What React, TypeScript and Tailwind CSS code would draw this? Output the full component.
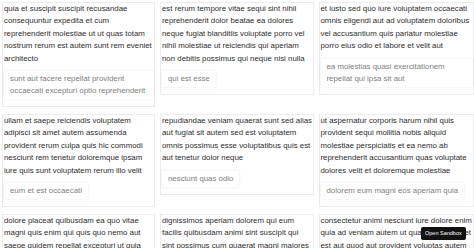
import type { FC } from 'react'

type Post = { id: number; title: string; body: string }

const posts: Post[] = [
  {
    id: 1,
    title: 'sunt aut facere repellat provident occaecati excepturi optio reprehenderit',
    body: 'quia et suscipit suscipit recusandae consequuntur expedita et cum reprehenderit molestiae ut ut quas totam nostrum rerum est autem sunt rem eveniet architecto',
  },
  {
    id: 2,
    title: 'qui est esse',
    body: 'est rerum tempore vitae sequi sint nihil reprehenderit dolor beatae ea dolores neque fugiat blanditiis voluptate porro vel nihil molestiae ut reiciendis qui aperiam non debitis possimus qui neque nisi nulla',
  },
  {
    id: 3,
    title: 'ea molestias quasi exercitationem repellat qui ipsa sit aut',
    body: 'et iusto sed quo iure voluptatem occaecati omnis eligendi aut ad voluptatem doloribus vel accusantium quis pariatur molestiae porro eius odio et labore et velit aut',
  },
  {
    id: 4,
    title: 'eum et est occaecati',
    body: 'ullam et saepe reiciendis voluptatem adipisci sit amet autem assumenda provident rerum culpa quis hic commodi nesciunt rem tenetur doloremque ipsam iure quis sunt voluptatem rerum illo velit',
  },
  {
    id: 5,
    title: 'nesciunt quas odio',
    body: 'repudiandae veniam quaerat sunt sed alias aut fugiat sit autem sed est voluptatem omnis possimus esse voluptatibus quis est aut tenetur dolor neque',
  },
  {
    id: 6,
    title: 'dolorem eum magni eos aperiam quia',
    body: 'ut aspernatur corporis harum nihil quis provident sequi mollitia nobis aliquid molestiae perspiciatis et ea nemo ab reprehenderit accusantium quas voluptate dolores velit et doloremque molestiae',
  },
  {
    id: 7,
    title: 'magnam facilis autem',
    body: 'dolore placeat quibusdam ea quo vitae magni quis enim qui quis quo nemo aut saepe quidem repellat excepturi ut quia sunt ut sequi eos ea sed quas',
  },
  {
    id: 8,
    title: 'dolorem dolore est ipsam',
    body: 'dignissimos aperiam dolorem qui eum facilis quibusdam animi sint suscipit qui sint possimus cum quaerat magni maiores excepturi ipsam ut commodi dolor voluptatum modi aut vitae',
  },
  {
    id: 9,
    title: 'nesciunt iure omnis dolorem tempora et accusantium',
    body: 'consectetur animi nesciunt iure dolore enim quia ad veniam autem ut quam aut nobis et est aut quod aut provident voluptas autem voluptas',
  },
]

const PostCard: FC<{ post: Post }> = ({ post }) => (
  <div className="flex flex-col items-start border border-[#ececec] pl-[1px] pb-[7px]">
    <p className="w-full text-[7.85px] leading-[12.4px] text-[#2e2e2e]">{post.body}</p>
    <div className="mt-[6px] px-[6px] py-[2px] text-[7.85px] leading-[12px] text-[#808080] shadow-[0_0_3px_rgba(0,0,0,0.09)]">
      {post.title}
    </div>
  </div>
)

export default function App() {
  return (
    <div
      className="relative h-[248px] w-[474px] overflow-hidden bg-white"
      style={{ fontFamily: '"Liberation Sans", Arial, sans-serif' }}
    >
      <div className="grid grid-cols-[153px_153.5px_155px] items-start gap-x-[5px] gap-y-[7px] pl-[2px] pt-[2px]">
        {posts.map((post) => (
          <PostCard key={post.id} post={post} />
        ))}
      </div>
      <div className="absolute left-[421px] top-[227px] rounded-[2px] bg-[#111] px-[4px] py-[3px] text-[5.5px] leading-[7px] text-white">
        Open Sandbox
      </div>
    </div>
  )
}
